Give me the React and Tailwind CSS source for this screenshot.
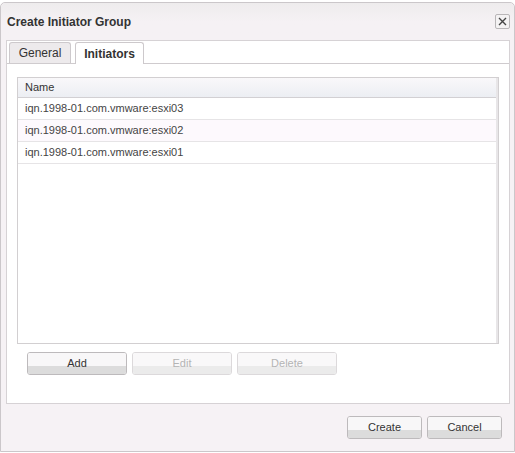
import React from 'react';

const rows = [
    'iqn.1998-01.com.vmware:esxi03',
    'iqn.1998-01.com.vmware:esxi02',
    'iqn.1998-01.com.vmware:esxi01',
];

// Old-style gradient button: white top, grey band at the bottom
const Button = ({ label, width, disabled }) => (
    <div
        className={`relative h-[23px] rounded-[3px] border overflow-hidden flex items-center justify-center ${
            disabled ? 'border-[#dcd9db] text-[#b4b4b4]' : 'border-[#bdbabc] text-[#333]'
        }`}
        style={{ width }}
    >
        <div className={`absolute inset-x-0 top-0 h-[13px] ${disabled ? 'bg-[#f9f8f9]' : 'bg-[#f8f7f8]'}`} />
        <div className={`absolute inset-x-0 bottom-0 h-[8px] ${disabled ? 'bg-[#ebebeb]' : 'bg-[#dcdcdc]'}`} />
        <span className="relative text-[11px] leading-none">{label}</span>
    </div>
);

const App = () => {
    return (
        <div className="w-[515px] h-[453px] bg-white pt-[2px] font-['Liberation_Sans',Arial,sans-serif]">
            <div className="h-[450px] border border-[#cbc7ca] rounded-t-[5px] bg-[#f6f2f5] flex flex-col">
                {/* Title bar */}
                <div className="h-[37px] flex items-center justify-between pl-[6px] pr-[4px] bg-gradient-to-b from-[#eeeced] via-[#f5f1f4] to-[#f5f1f4] rounded-t-[5px]">
                    <span className="text-[12px] font-bold text-[#333]">Create Initiator Group</span>
                    <div className="w-[15px] h-[15px] border border-[#b9b6b8] rounded-[2px] bg-[#f4f2f3] flex items-center justify-center">
                        <svg width="9" height="9" viewBox="0 0 9 9">
                            <path d="M1 1 L8 8 M8 1 L1 8" stroke="#444" strokeWidth="1.4" />
                        </svg>
                    </div>
                </div>

                {/* Tab panel */}
                <div className="ml-[5px] mr-[4px] h-[364px] bg-white border border-[#d6d2d5] flex flex-col">
                    <div className="h-[23px] flex items-end gap-[4px] pl-[2px] border-b border-[#cfcbce]">
                        <div className="w-[62px] h-[21px] rounded-t-[3px] border border-b-0 border-[#cdc9cc] bg-[#edeaec] flex items-center justify-center text-[12px] text-[#333]">
                            General
                        </div>
                        <div className="w-[69px] h-[22px] -mb-px rounded-t-[3px] border border-b-0 border-[#cdc9cc] bg-white flex items-center justify-center text-[12px] font-bold text-[#333]">
                            Initiators
                        </div>
                    </div>

                    <div className="pl-[10px] pt-[13px]">
                        {/* Grid */}
                        <div className="w-[482px] h-[267px] border border-[#d2cfd1] bg-white flex">
                            <div className="flex-1 flex flex-col">
                                <div className="h-[20px] bg-gradient-to-b from-[#f9f8fa] to-[#eceef3] border-b border-[#d2d0d3] flex items-center pl-[7px] text-[11px] text-[#333]">
                                    Name
                                </div>
                                {rows.map((r, i) => (
                                    <div
                                        key={r}
                                        className={`h-[22px] border-b border-[#e6e4e6] flex items-center pl-[7px] text-[11px] text-[#444] ${
                                            i === 1 ? 'bg-[#fdf9fd]' : 'bg-white'
                                        }`}
                                    >
                                        {r}
                                    </div>
                                ))}
                            </div>
                            <div className="w-[2px] bg-[#e8e6e8]" />
                        </div>

                        <div className="flex gap-[5px] pl-[10px] pt-[8px]">
                            <Button label="Add" width={100} />
                            <Button label="Edit" width={100} disabled />
                            <Button label="Delete" width={100} disabled />
                        </div>
                    </div>
                </div>

                {/* Footer */}
                <div className="flex justify-end gap-[5px] pr-[12px] pt-[12px]">
                    <Button label="Create" width={75} />
                    <Button label="Cancel" width={75} />
                </div>
            </div>
        </div>
    );
};

export default App;
